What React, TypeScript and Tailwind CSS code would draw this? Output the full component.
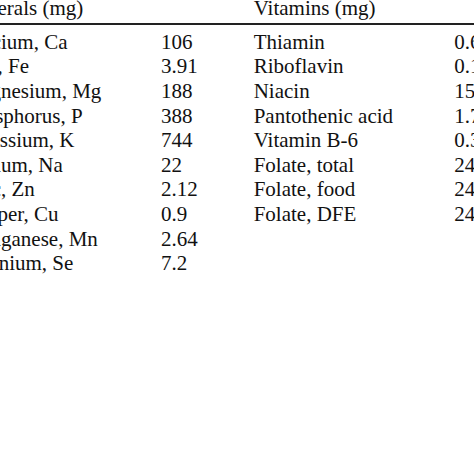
const minerals = [
  ["Calcium, Ca", "106"],
  ["Iron, Fe", "3.91"],
  ["Magnesium, Mg", "188"],
  ["Phosphorus, P", "388"],
  ["Potassium, K", "744"],
  ["Sodium, Na", "22"],
  ["Zinc, Zn", "2.12"],
  ["Copper, Cu", "0.9"],
  ["Manganese, Mn", "2.64"],
  ["Selenium, Se", "7.2"],
];

const vitamins = [
  ["Thiamin", "0.64"],
  ["Riboflavin", "0.15"],
  ["Niacin", "15.6"],
  ["Pantothenic acid", "1.73"],
  ["Vitamin B-6", "0.35"],
  ["Folate, total", "243"],
  ["Folate, food", "243"],
  ["Folate, DFE", "243"],
];

export default function App() {
  const rows = minerals.map((m, i) => [m[0], m[1], vitamins[i]?.[0] ?? "", vitamins[i]?.[1] ?? ""]);
  return (
    <div className="w-[474px] h-[474px] overflow-hidden bg-white text-[#111] font-['Liberation_Serif',serif] text-[21px] leading-[24.6px]">
      <div className="ml-[-37.5px] w-[560px] -mt-[4px]">
        <div className="grid grid-cols-[198.5px_92.7px_200.6px_1fr] h-[27.3px] items-start">
          <div>Minerals (mg)</div>
          <div></div>
          <div>Vitamins (mg)</div>
          <div></div>
        </div>
        <div className="h-[2px] bg-[#222]" />
        <div className="pt-[4.6px]">
          {rows.map((r, i) => (
            <div key={i} className="grid grid-cols-[198.5px_92.7px_200.6px_1fr] h-[24.6px]">
              <div>{r[0]}</div>
              <div>{r[1]}</div>
              <div>{r[2]}</div>
              <div>{r[3]}</div>
            </div>
          ))}
        </div>
      </div>
    </div>
  );
}
